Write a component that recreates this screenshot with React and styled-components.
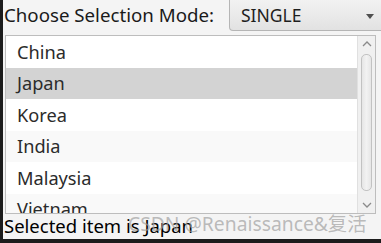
import React from "react";
import styled, { createGlobalStyle } from "styled-components";

const Global = createGlobalStyle`
  html, body { margin: 0; padding: 0; background: #1c1c1c; }
  #root { width: 381px; height: 243px; overflow: hidden; }
`;

const Frame = styled.div`
  position: relative;
  width: 378px;
  height: 239px;
  margin-left: 3px;
  background: #f4f4f4;
  font-family: "Noto Sans", "Noto Sans CJK SC", sans-serif;
  display: flex;
  flex-direction: column;
  overflow: hidden;
`;

const TopRow = styled.div`
  display: flex;
  align-items: flex-start;
  height: 35px;
  flex-shrink: 0;
`;

const Label = styled.div`
  font-size: 18.7px;
  color: #1a1a1a;
  padding: 3px 0 0 1px;
  line-height: 24px;
  white-space: nowrap;
  width: 225px;
`;

const Combo = styled.div`
  flex: 1;
  height: 31px;
  margin-right: -4px;
  box-sizing: border-box;
  border: 1px solid #b5b5b5;
  border-top: none;
  border-bottom-left-radius: 4px;
  background: linear-gradient(#f2f2f2, #e2e2e2);
  display: flex;
  align-items: center;
  justify-content: space-between;
  padding: 0 10px 0 11px;
  font-size: 17.5px;
  color: #1e1e1e;
`;

const Arrow = styled.div`
  width: 0;
  height: 0;
  border-left: 4px solid transparent;
  border-right: 4px solid transparent;
  border-top: 5px solid #505050;
  margin-top: 2px;
`;

const List = styled.div`
  margin-left: 2px;
  width: 371px;
  height: 179px;
  flex-shrink: 0;
  box-sizing: border-box;
  border: 1px solid #bdbdbd;
  background: #ffffff;
  display: flex;
  overflow: hidden;
`;

const Rows = styled.div`
  flex: 1;
  display: flex;
  flex-direction: column;
`;

const Row = styled.div`
  height: 31.5px;
  flex-shrink: 0;
  box-sizing: border-box;
  padding-left: 11px;
  display: flex;
  align-items: center;
  font-size: 18.2px;
  color: #2b2b2b;
  background: ${(p) => (p.$selected ? "#d3d3d3" : p.$odd ? "#f9f9f9" : "#ffffff")};
`;

const ScrollBar = styled.div`
  width: 17px;
  border-left: 1px solid #e0e0e0;
  background: #f0f0f0;
  display: flex;
  flex-direction: column;
  align-items: center;
`;

const ArrowBtn = styled.div`
  height: 16px;
  display: flex;
  align-items: center;
  justify-content: center;
  flex-shrink: 0;
`;

const Thumb = styled.div`
  flex: 1;
  width: 11px;
  margin: 2px 0 6px;
  border: 1px solid #c2c2c2;
  border-radius: 5px;
  background: linear-gradient(90deg, #e6e6e6, #f2f2f2, #e6e6e6);
  box-sizing: border-box;
`;

const Bottom = styled.div`
  font-size: 18.5px;
  color: #000;
  padding-left: 1px;
  line-height: 23px;
  margin-top: 0;
  white-space: nowrap;
`;

const Watermark = styled.div`
  position: absolute;
  left: 125px;
  top: 212px;
  font-size: 19.3px;
  line-height: 24px;
  color: rgba(160, 160, 160, 0.7);
  white-space: nowrap;
  font-family: "Noto Sans", "Noto Sans CJK SC", sans-serif;
`;

const items = ["China", "Japan", "Korea", "India", "Malaysia", "Vietnam", "Thailand"];

const Chevron = ({ up }) => (
  <svg width="10" height="6" viewBox="0 0 10 6">
    <polyline
      points={up ? "1,5 5,1 9,5" : "1,1 5,5 9,1"}
      fill="none"
      stroke="#8a8a8a"
      strokeWidth="1.3"
    />
  </svg>
);

export default function App() {
  return (
    <>
      <Global />
      <Frame>
        <TopRow>
          <Label>Choose Selection Mode:</Label>
          <Combo>
            <span>SINGLE</span>
            <Arrow />
          </Combo>
        </TopRow>
        <List>
          <Rows>
            {items.map((it, i) => (
              <Row key={it} $odd={i % 2 === 1} $selected={it === "Japan"}>
                {it}
              </Row>
            ))}
          </Rows>
          <ScrollBar>
            <ArrowBtn>
              <Chevron up />
            </ArrowBtn>
            <Thumb />
            <ArrowBtn>
              <Chevron />
            </ArrowBtn>
          </ScrollBar>
        </List>
        <Bottom>Selected item is Japan</Bottom>
        <Watermark>CSDN @Renaissance&amp;复活</Watermark>
      </Frame>
    </>
  );
}
